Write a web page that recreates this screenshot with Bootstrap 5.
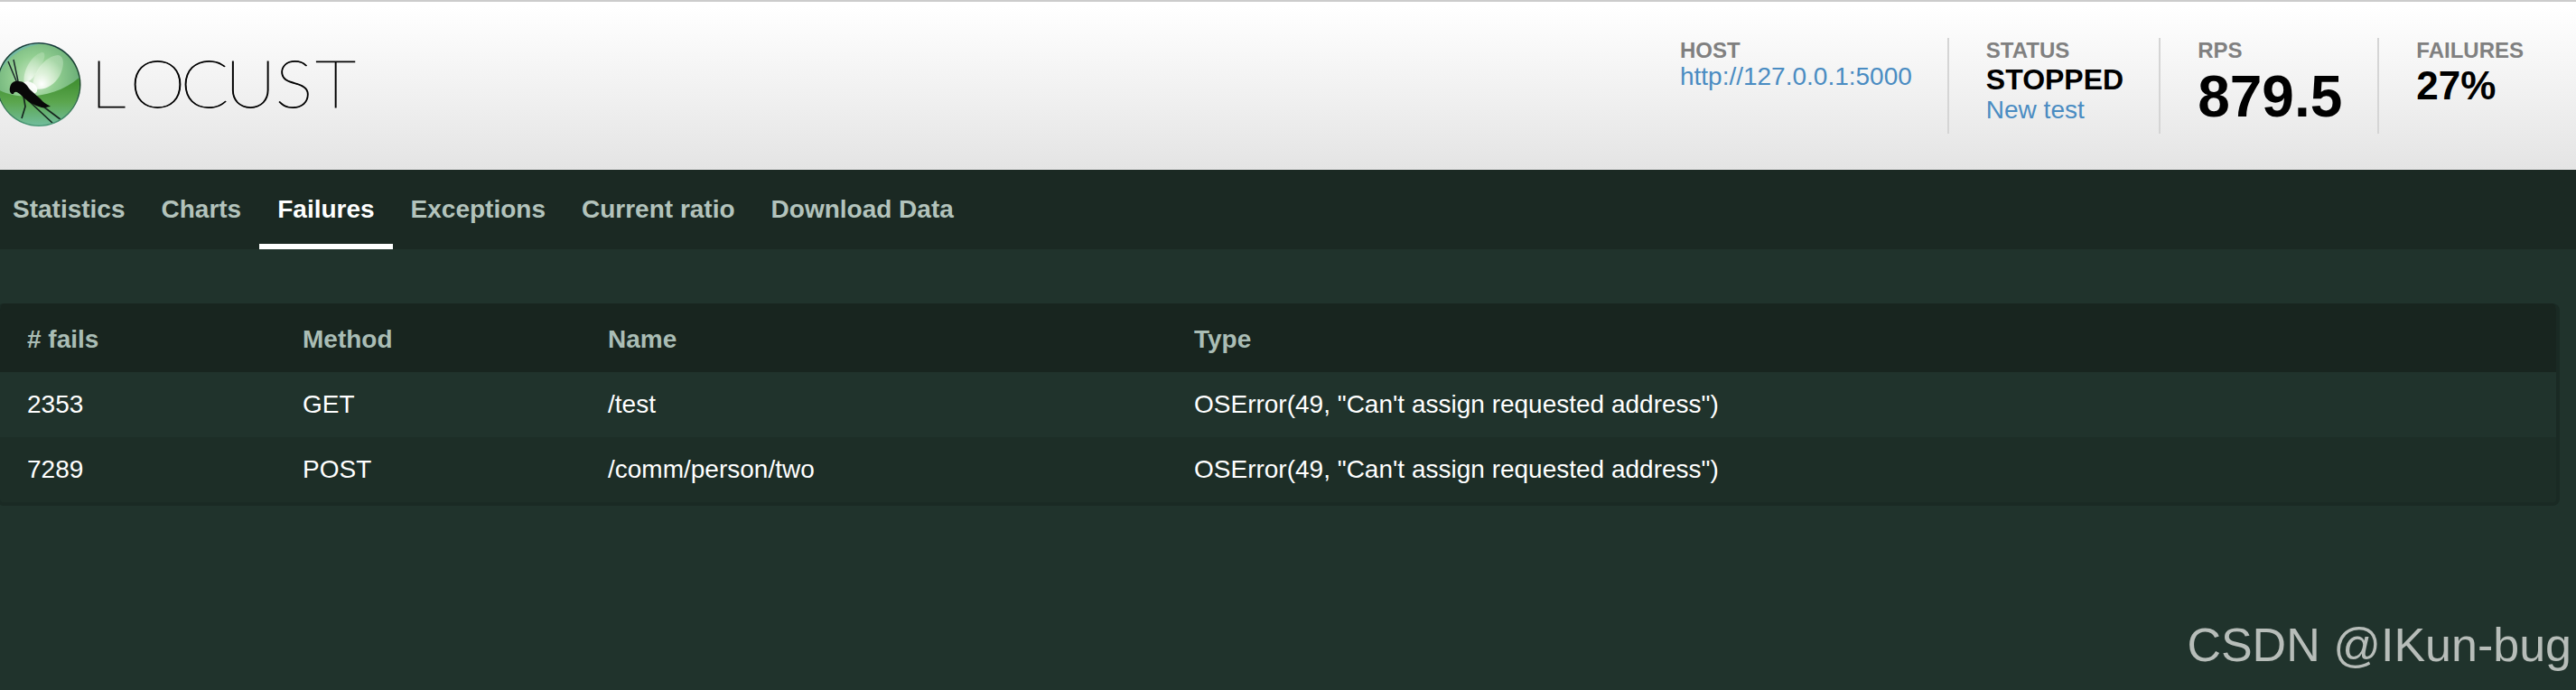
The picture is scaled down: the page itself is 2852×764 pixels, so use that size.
<!DOCTYPE html>
<html lang="en"><head><meta charset="utf-8"><title>Locust</title>
<link rel="stylesheet" href="https://cdn.jsdelivr.net/npm/bootstrap@5.3.0/dist/css/bootstrap.min.css">
<style>
html,body{height:100%}
body{background:#20332c;font-family:"Liberation Sans",Arial,sans-serif;font-size:28px;color:#fff;overflow:hidden}
.lc-head{height:188px;border-top:2px solid #ccc;background:linear-gradient(#fff 0,#fff 6px,#e4e4e4 100%)}
.lc-logo{margin-left:-2px}
.lc-wordmark{font-family:Lato,Roboto,sans-serif;font-weight:100}
.lc-stats{margin-right:58px}
.lc-stat{height:106px;padding:0 39px 0 41px;border-right:2px solid #d5d5d5;line-height:32px}
.lc-stat:last-child{border-right:0;padding-right:0}
.lc-label{font-size:24px;font-weight:700;color:#808080;line-height:26px;margin-top:1px}
.lc-stat a{color:#4a8cc2;text-decoration:none}
.lc-status{font-size:32px;font-weight:700;color:#000;line-height:34px;margin:2px 0 1px}
.lc-rps{font-size:64px;font-weight:700;color:#000;line-height:72px;margin-top:2px}
.lc-fail{font-size:44px;font-weight:700;color:#000;line-height:50px;margin-top:1px}
.lc-nav{background:#1b2923;height:88px}
.lc-nav ul{margin-left:-6px}
.lc-nav .nav-link{color:#b3c3bc;font-weight:700;font-size:28px;line-height:32px;padding:28px 20px 22px;height:88px;border-bottom:6px solid transparent}
.lc-nav .nav-link.active{color:#fff;border-bottom-color:#fff}
.lc-main{padding-top:60px}
.lc-tablewrap{margin:0 18px 0 -4px;border:4px solid #1a2a24;border-top:0;border-radius:8px;overflow:hidden}
.lc-table{table-layout:fixed;margin:0;--bs-table-bg:transparent;--bs-table-color:#fff;border-color:transparent}
.lc-table th,.lc-table td{height:72px;padding:0 0 0 30px;vertical-align:middle;border:0;background:transparent;color:#fff;font-size:28px}
.lc-table th{color:#aabdb5;font-weight:700;height:76px;padding-top:3px}
.lc-table thead tr{background:#18251f}
.lc-table tbody tr:nth-child(1){background:#20332c}
.lc-table tbody tr:nth-child(2){background:#1d2e27}
.lc-c1{width:305px}.lc-c2{width:338px}.lc-c3{width:649px}
.lc-mark{position:absolute;right:5px;bottom:20px;font-size:52px;line-height:60px;color:#b7bdb9;white-space:nowrap}
</style></head>
<body>
<header class="lc-head d-flex justify-content-between align-items-center">
<svg class="lc-logo" width="410" height="120" viewBox="-2 35 410 120" xmlns="http://www.w3.org/2000/svg" role="img" aria-label="Locust">
<defs>
<radialGradient id="g1" cx=".45" cy=".42" r=".62">
<stop offset="0" stop-color="#cfe9cb"/><stop offset=".4" stop-color="#93cf92"/><stop offset=".8" stop-color="#6fb27a"/><stop offset="1" stop-color="#4f9c90"/>
</radialGradient>
<linearGradient id="g2" x1="0" y1="0" x2="0" y2="1">
<stop offset="0" stop-color="#3a8a2a"/><stop offset=".5" stop-color="#5ba64e"/><stop offset="1" stop-color="#74c0a6"/>
</linearGradient>
<radialGradient id="g3" cx=".3" cy=".85" r=".8"><stop offset="0" stop-color="#fff"/><stop offset=".4" stop-color="#e6f5e2" stop-opacity=".85"/><stop offset="1" stop-color="#dff2dc" stop-opacity=".35"/></radialGradient>
<linearGradient id="g4" x1="0" y1="0" x2="0" y2="1"><stop offset="0" stop-color="#14383a"/><stop offset=".5" stop-color="#1f4a2a"/><stop offset="1" stop-color="#4a9a78"/></linearGradient>
<clipPath id="c1"><circle cx="43" cy="93.5" r="45"/></clipPath>
</defs>
<circle cx="43" cy="93.5" r="46.5" fill="url(#g4)"/>
<g clip-path="url(#c1)">
<rect x="-4" y="46" width="94" height="96" fill="url(#g1)"/>
<path d="M-4 98C18 112 62 110 90 84V142H-4Z" fill="url(#g2)"/>
<path d="M-4 66C8 50 30 46 48 48C24 52 8 62 -2 84Z" fill="#6fb7ad" opacity=".8"/>
<path d="M27 93C24 80 34 62 46 58C51 57 50 64 46 72C41 82 34 90 27 93Z" fill="url(#g3)" opacity=".75"/>
<path d="M36 97C36 80 50 62 64 61C72 62 71 74 66 84C59 96 46 102 36 97Z" fill="url(#g3)"/>
<ellipse cx="33" cy="97" rx="9" ry="6" transform="rotate(30 33 97)" fill="#fff" opacity=".9"/>
<path d="M9 68L19 92M15 66L20 90" stroke="#1d2b2b" stroke-width="1.5" fill="none"/>
<path d="M26 106L28 118L24 131M30 110L59 137M48 118L68 133" stroke="#16261f" stroke-width="1.7" fill="none"/>
<path d="M11 97C12 92 15 89 21 90C26 90 29 93 33 99C38 104 44 108 47 112C50 115 54 116 56 118C52 118 50 120 46 119C38 117 30 112 24 106C20 102 16 100 15 104C12 105 10 101 11 97Z" fill="#080808"/>
</g>
<text class="lc-wordmark" transform="scale(1.09 1)" x="91.7 131.8 183.2 228.4 279.5 320.4" y="119" font-size="72" fill="#000" stroke="#000" stroke-width=".9">LOCUST</text>
</svg>
<div class="lc-stats d-flex">
<div class="lc-stat"><div class="lc-label">HOST</div><a href="#">http://127.0.0.1:5000</a></div>
<div class="lc-stat"><div class="lc-label">STATUS</div><div class="lc-status">STOPPED</div><a href="#">New test</a></div>
<div class="lc-stat"><div class="lc-label">RPS</div><div class="lc-rps">879.5</div></div>
<div class="lc-stat"><div class="lc-label">FAILURES</div><div class="lc-fail">27%</div></div>
</div>
</header>
<nav class="lc-nav">
<ul class="nav">
<li class="nav-item"><a class="nav-link" href="#">Statistics</a></li>
<li class="nav-item"><a class="nav-link" href="#">Charts</a></li>
<li class="nav-item"><a class="nav-link active" href="#">Failures</a></li>
<li class="nav-item"><a class="nav-link" href="#">Exceptions</a></li>
<li class="nav-item"><a class="nav-link" href="#">Current ratio</a></li>
<li class="nav-item"><a class="nav-link" href="#">Download Data</a></li>
</ul>
</nav>
<main class="lc-main">
<div class="lc-tablewrap">
<table class="table lc-table">
<colgroup><col class="lc-c1"><col class="lc-c2"><col class="lc-c3"><col></colgroup>
<thead><tr><th># fails</th><th>Method</th><th>Name</th><th>Type</th></tr></thead>
<tbody>
<tr><td>2353</td><td>GET</td><td>/test</td><td>OSError(49, "Can't assign requested address")</td></tr>
<tr><td>7289</td><td>POST</td><td>/comm/person/two</td><td>OSError(49, "Can't assign requested address")</td></tr>
</tbody>
</table>
</div>
</main>
<div class="lc-mark">CSDN @IKun-bug</div>
<script src="https://cdn.jsdelivr.net/npm/bootstrap@5.3.0/dist/js/bootstrap.bundle.min.js"></script>
</body></html>
